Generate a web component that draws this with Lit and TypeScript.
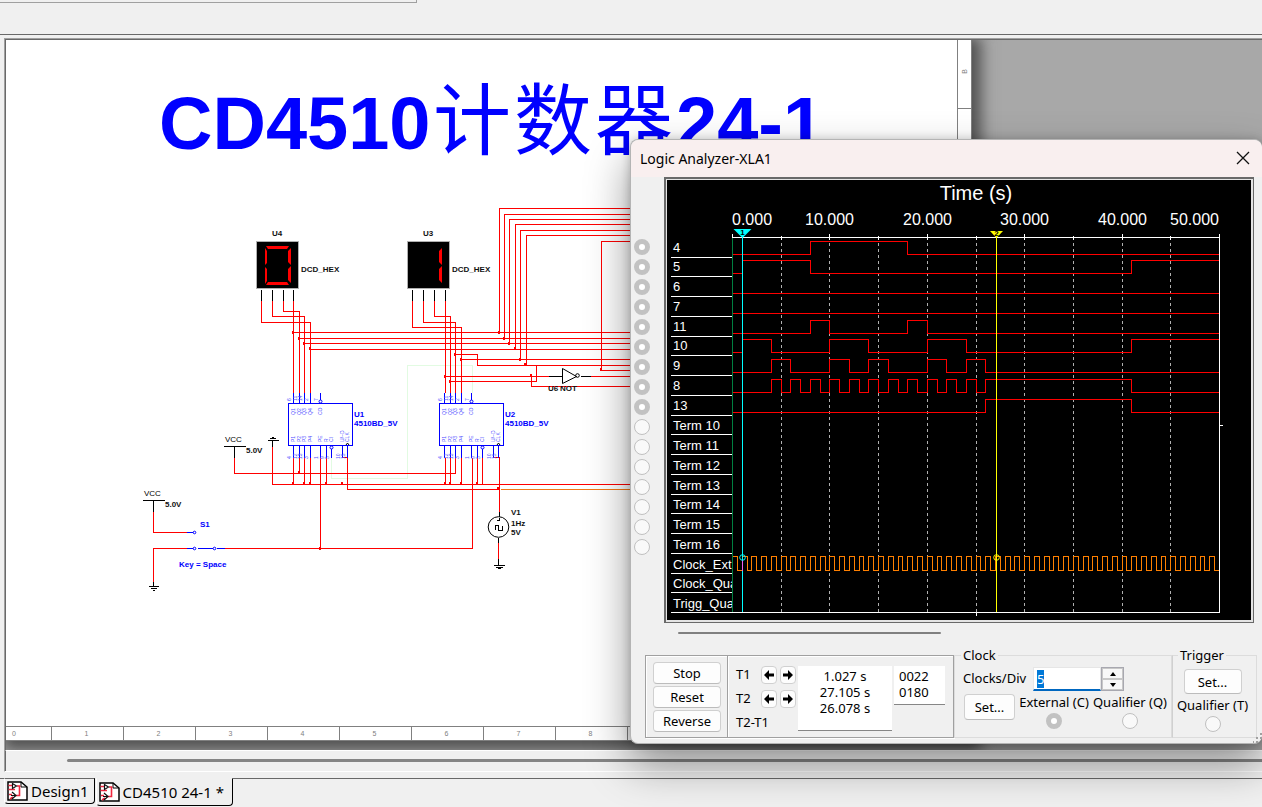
import { LitElement, html, svg, css } from "lit";
import { customElement, query } from "lit/decorators.js";
import { classMap } from "lit/directives/class-map.js";

/* ---------- schematic data ---------- */

const chipTop: [number, string, string][] = [
  [5, "Q1", "6"], [11, "Q2", "11"], [16, "Q3", "14"], [22, "Q4", "2"], [32, "CO", "7"],
];
const chipBottom: [number, string, string][] = [
  [5, "P1", "4"], [11, "P2", "12"], [16, "P3", "13"], [22, "P4", "3"], [32, "PE", "1"],
  [38, "R", "9"], [43, "CI", "5"], [54, "U/~D", "10"], [59, "CLK", "15"],
];

const redWires = [
  "M261 300V322H310V392", "M272 300V316H304V392", "M283 300V311H299V392", "M293 300V392",
  "M412 300V327H461V392", "M423 300V322H455V392", "M434 300V316H450V392", "M445 300V392",
  "M293 332H631", "M299 338H631", "M304 343H631", "M310 349H631",
  "M631 208H499V332", "M631 214H504V338", "M631 219H509V343", "M631 224H515V349",
  "M631 230H520V359", "M631 235H526V365", "M631 241H601V370H631",
  "M455 354H477V365H631", "M461 359H631", "M445 376H548", "M590 376H631",
  "M450 381H536V365", "M531 376V386H631",
  "M234 457V473H455V457", "M272 446V484H631", "M299 457V473",
  "M293 457V484", "M304 457V484", "M310 457V484", "M326 457V484",
  "M320 457V548", "M342 457H347V489H499", "M445 457V484", "M450 457V484", "M461 457V484",
  "M477 457V484", "M482 457V484", "M493 457H499V511", "M498 542V558",
  "M472 457V548H224", "M153 511V532H186", "M186 548H153V581",
];

const blackWires = [
  "M261 289V300", "M272 289V300", "M283 289V300", "M293 289V300",
  "M412 289V300", "M423 289V300", "M434 289V300", "M445 289V300",
  "M548 376H562", "M580 376H590",
  "M223 446H245", "M234 446V457", "M267 440H278", "M269 438H275", "M271 437H273", "M272 440V446",
  "M142 500H164", "M153 500V511", "M153 581V586", "M148 586H158", "M150 588H156", "M152 590H154",
  "M499 511V516", "M498 537V542", "M498 558V565", "M493 565H504", "M495 567H502", "M497 568H500",
  "M629 332H631", "M629 338H631", "M629 343H631", "M629 349H631", "M629 359H631", "M629 365H631",
];

const blueWires = ["M186 532H193", "M186 548H193", "M197 548H212", "M216 548H224"];

const junctions: [number, number][] = [
  [293, 332], [299, 338], [304, 343], [310, 348], [499, 332], [504, 338], [509, 343], [515, 348],
  [520, 359], [525, 364], [601, 369], [455, 354], [461, 359], [445, 376], [450, 381], [531, 375],
  [299, 472], [293, 483], [304, 483], [310, 483], [326, 483], [342, 483],
  [445, 483], [450, 483], [461, 483], [477, 483], [498, 488], [320, 548],
];

/* ---------- analyzer data ---------- */

interface Channel { name: string; high?: [number, number][]; }

const END = 50;
const channels: Channel[] = [
  { name: "4", high: [[8, 18]] },
  { name: "5", high: [[1, 8], [41, END]] },
  { name: "6", high: [] },
  { name: "7", high: [] },
  { name: "11", high: [[8, 10], [18, 20]] },
  { name: "10", high: [[1, 4], [10, 14], [20, 24], [41, END]] },
  { name: "9", high: [[4, 6], [10, 12], [14, 16], [20, 22], [24, 26]] },
  {
    name: "8",
    high: [...Array.from({ length: 11 }, (_, i): [number, number] => [4 + 2 * i, 5 + 2 * i]), [26, 41]],
  },
  { name: "13", high: [[26, 41]] },
  { name: "Term 10" }, { name: "Term 11" }, { name: "Term 12" }, { name: "Term 13" },
  { name: "Term 14" }, { name: "Term 15" }, { name: "Term 16" },
  { name: "Clock_Ext" }, { name: "Clock_Qua" }, { name: "Trigg_Qua" },
];

const timeX = (t: number) => Math.floor(732.5 + t * 9.74) + 0.5;
const ruleY = (row: number) => Math.floor(257 + row * 19.75) + 0.5;

function wave(row: number, high: [number, number][]) {
  const lo = ruleY(row) - 3;
  const hi = ruleY(row) - 16;
  let d = `M733 ${lo}`;
  for (const [a, b] of high) {
    d += `H${timeX(a)}V${hi}H${timeX(b)}`;
    if (b < END) d += `V${lo}`;
  }
  return `${d}H1219`;
}

function clock(row: number) {
  const lo = ruleY(row) - 3;
  const hi = ruleY(row) - 17;
  let d = `M733 ${hi}`;
  for (let n = 0; n < END; n++) {
    d += `H${timeX(n + 0.5)}V${lo}H${timeX(n + 1)}`;
    if (n + 1 < END) d += `V${hi}`;
  }
  return d;
}

/* ---------- schematic sheet ---------- */

@customElement("schematic-sheet")
class SchematicSheet extends LitElement {
  static styles = css`
    :host { display: block; width: 966px; background: #fff; box-shadow: 3px 3px 14px 6px #505050; }
    .upper { display: flex; }
    .drawing { display: block; width: 951px; height: 686px; flex: none; }
    .side { flex: 1; border-left: 1px solid #808080; border-right: 1px solid #808080; display: flex; flex-direction: column; }
    .zone { height: 69px; border-bottom: 1px solid #808080; display: flex; align-items: center; justify-content: center;
      font: 7px "Liberation Sans", sans-serif; color: #808080; box-sizing: border-box; padding-bottom: 6px; }
    .zone span { transform: rotate(-90deg); }
    .ruler { display: flex; height: 13px; border-top: 1px solid #808080; border-bottom: 1px solid #808080; overflow: hidden; }
    .cell { flex: none; width: 72px; box-sizing: border-box; border-right: 1px solid #808080; text-align: center;
      padding-right: 2px; font: 7px/13px "Liberation Sans", sans-serif; color: #808080; }
    .cell:first-child { width: 46px; padding-right: 29px; }
    .wire { fill: none; stroke: #f00; shape-rendering: crispEdges; }
    .black { stroke: #000; }
    .blue { stroke: #00f; }
    .orange { stroke: #f07818; }
    .pale { stroke: #e2fbe2; }
    .dot { fill: #f00; }
    .outline { fill: none; stroke: #000; }
    .bubble { fill: #fff; stroke: #00f; }
    .seg { fill: #f00; }
    .heading { font: bold 74px "Liberation Sans", sans-serif; fill: #00f; }
    .han { font: 400 78px "Noto Sans CJK SC", sans-serif; fill: #00f; }
    .label { font: bold 8px "Liberation Sans", sans-serif; fill: #111; }
    .ink { fill: #00f; }
    .plain { font: 8px "Liberation Sans", sans-serif; fill: #000; }
    .pin { font: 5px "Liberation Sans", sans-serif; fill: #5050ff; }
  `;

  private path(d: string, kind = "") {
    return svg`<path class="wire ${kind}" transform="translate(.5 .5)" d=${d}></path>`;
  }

  private chip(x: number, name: string) {
    return svg`
      <rect x=${x + 0.5} y="403.5" width="64" height="42" class="wire blue"></rect>
      ${chipTop.map(([dx, n, num]) => svg`
        ${this.path(`M${x + dx} 392V403`, "blue")}
        <text class="pin" transform="translate(${x + dx + 2} 415) rotate(-90)">${n}</text>
        <text class="pin" transform="translate(${x + dx - 2} 401) rotate(-90)">${num}</text>`)}
      ${chipBottom.map(([dx, n, num]) => svg`
        ${this.path(`M${x + dx} 445V457`, "blue")}
        <text class="pin" transform="translate(${x + dx + 2} 442) rotate(-90)">${n}</text>
        <text class="pin" transform="translate(${x + dx - 2} 459) rotate(-90)">${num}</text>`)}
      <circle class="bubble" cx=${x + 32.5} cy="401.5" r="1.5"></circle>
      <circle class="bubble" cx=${x + 43.5} cy="447.5" r="1.5"></circle>
      <path class="outline blue" d="M${x + 58} 445L${x + 59.5} 443L${x + 61} 445"></path>
      <text class="label ink" x=${x + 66} y="417">${name}</text>
      <text class="label ink" x=${x + 66} y="426">4510BD_5V</text>`;
  }

  private display(x: number, name: string, digit: number) {
    const right = svg`
      <path class="seg" d="M${x + 35} 248l-3 3v11l3 3zM${x + 35} 266l-3 3v11l3 3z"></path>`;
    const rest = svg`
      <path class="seg" d="M${x + 10} 246h23l-2 3h-19zM${x + 10} 285h23l-2-3h-19z"></path>
      <path class="seg" d="M${x + 9} 248l2 3v12l-2 2zM${x + 9} 267l2 2v12l-2 3z"></path>`;
    return svg`
      <text class="label" x=${x + 16} y="236">${name}</text>
      <rect x=${x + 0.5} y="241.5" width="42" height="47" fill="#000" stroke="#b0b0b0"></rect>
      ${digit === 0 ? rest : ""}${right}
      <text class="label" x=${x + 45} y="272">DCD_HEX</text>`;
  }

  render() {
    return html`
      <div class="upper">
        <svg class="drawing" viewBox="6 40 951 686" role="img" aria-label="Counter schematic">
          <text class="heading" x="159" y="149">CD4510</text>
          <text class="han" x="433" y="149">计</text>
          <text class="han" x="514" y="149">数</text>
          <text class="han" x="595" y="149">器</text>
          <text class="heading" x="676" y="149">24-1</text>
          ${this.path("M331 457V478H407V365H472V392", "pale")}
          ${redWires.map((d) => this.path(d))}
          ${blackWires.map((d) => this.path(d, "black"))}
          ${blueWires.map((d) => this.path(d, "blue"))}
          ${this.path("M500 489H631", "orange")}
          ${junctions.map(([x, y]) => svg`<rect class="dot" x=${x - 1} y=${y - 1} width="2" height="3"></rect>`)}
          ${this.display(256, "U4", 0)} ${this.display(407, "U3", 1)}
          ${this.chip(288, "U1")} ${this.chip(439, "U2")}
          <path class="outline" d="M562.5 368.500V383.500L576.500 376.500Z"></path>
          <circle class="outline" cx="577.5" cy="375.5" r="1.8"></circle>
          <text class="label" x="548" y="391">U6</text><text class="label" x="560" y="391">NOT</text>
          <text class="plain" x="225" y="442">VCC</text><text class="label" x="246" y="453">5.0V</text>
          <text class="plain" x="144" y="496">VCC</text><text class="label" x="165" y="507">5.0V</text>
          <text class="label ink" x="200" y="527">S1</text>
          <text class="label ink" x="179" y="567">Key = Space</text>
          <circle class="bubble" cx="194.5" cy="532.5" r="1.3"></circle>
          <circle class="bubble" cx="194.5" cy="548.5" r="1.3"></circle>
          <circle class="bubble" cx="214.5" cy="548.5" r="1.3"></circle>
          <circle class="outline" cx="498.5" cy="527" r="10.300"></circle>
          <path class="wire black" d="M495.5 530V525.500H498.500V530.500H502.500V525.500M497 520.500H499.500V518"></path>
          <text class="label" x="511" y="515">V1</text>
          <text class="label" x="511" y="526">1Hz</text>
          <text class="label" x="511" y="535">5V</text>
        </svg>
        <div class="side"><div class="zone"><span>B</span></div></div>
      </div>
      <div class="ruler">
        ${Array.from({ length: 13 }, (_, i) => html`<div class="cell">${i}</div>`)}
      </div>`;
  }
}

/* ---------- logic analyzer window ---------- */

@customElement("logic-analyzer")
class LogicAnalyzer extends LitElement {
  @query(".divisions") divisions!: HTMLInputElement;

  static styles = css`
    :host { display: block; box-sizing: border-box; border: 1px solid #b4b4b4; border-right: 0; border-radius: 8px; background: #f0f0f0;
      box-shadow: 0 20px 44px rgba(0, 0, 0, .42), 0 1px 10px rgba(0, 0, 0, .22);
      font: 13px/16px "Noto Sans", sans-serif; color: #000; }
    .title { display: flex; align-items: center; justify-content: space-between; height: 37px; padding: 0 8px 0 9px;
      background: #f9efef; border-radius: 8px 8px 0 0; font-size: 14px; }
    .close { width: 22px; height: 22px; padding: 3px 4px 5px; border: 0; background: none; }
    .close svg { display: block; }
    .main { display: flex; }
    .terminals { display: flex; flex-direction: column; gap: 4px; width: 30px; padding: 62px 0 0 3px; }
    .radio { appearance: none; box-sizing: border-box; width: 16px; height: 16px; margin: 0; border: 1px solid #c0c0c0;
      border-radius: 50%; background: #f9f9f9; }
    .radio:checked { border: 5px solid #c2c2c2; background: #fff; }
    .screen { flex: 1; min-width: 0; margin-right: 8px; border: 2px solid #696969; border-width: 2px 1px 1px 2px; padding: 1px 2px 2px 1px;
      background: linear-gradient(#000, #000) content-box, #e4e4e4; }
    .plot { display: block; width: 100%; }
    .thumb { width: 263px; height: 2px; margin: 9px 0 21px 47px; border-radius: 1px; background: #808080; }
    .panels { display: grid; grid-template-columns: 309px 218px 1fr; margin: 0 5px 5px 14px; }
    .box { display: flex; height: 83px; box-sizing: border-box; border: 1px solid #a0a0a0; box-shadow: inset 1px 1px #fff, 1px 1px #fff; }
    .actions { display: flex; flex-direction: column; gap: 2px; padding: 6px 6px 0 7px; width: 68px; border-right: 1px solid #a0a0a0; }
    .push { box-sizing: border-box; height: 22px; padding: 0; border: 1px solid #d0d0d0; border-bottom-color: #bcbcbc; border-radius: 4px;
      background: #fdfdfd; font: inherit; color: #000; }
    .readout { flex: 1; display: flex; gap: 2px; padding: 7px 0 0 8px; box-shadow: inset 1px 0 #fff; }
    .steps { display: grid; grid-template-columns: 22px 16px 16px; grid-auto-rows: 24px; column-gap: 3px; align-items: center; }
    .steps span { padding-bottom: 2px; }
    .wide { grid-column: 1 / 4; }
    .step { box-sizing: border-box; height: 18px; padding: 0; border: 1px solid #d0d0d0; border-radius: 4px; background: #fdfdfd;
      display: flex; align-items: center; justify-content: center; }
    .times, .values { display: block; box-sizing: border-box; margin-top: 3px; padding: 2px 0 0; background: #fff; border-bottom: 1px solid #868686; }
    .times { width: 94px; height: 65px; text-align: center; }
    .values { width: 51px; height: 39px; padding-left: 5px; }
    .group { min-width: 0; height: 91px; box-sizing: border-box; margin: -8px 0 0; padding: 0 8px; border: 1px solid #dcdcdc; }
    .group legend { padding: 0 2px; margin-left: -2px; }
    .trigger { border-left-color: #d0d0d0; padding: 0 7px; }
    .line { display: flex; align-items: center; height: 24px; margin-top: 4px; }
    .line label { width: 70px; padding-bottom: 2px; }
    .divisions { box-sizing: border-box; width: 68px; height: 24px; padding: 0 3px; border: 1px solid #e6e6e6; border-bottom: 2px solid #0067c0;
      border-radius: 0; outline: 0; background: #fff; font: inherit; color: #000; }
    .divisions::selection { background: #0078d7; color: #fff; }
    .spin { display: flex; flex-direction: column; box-sizing: border-box; width: 23px; height: 24px; border: 1px solid #a8a8b0; }
    .notch { flex: 1; padding: 0; border: 1px solid #c8c8c8; background: #f8f8f8; display: flex; align-items: center; justify-content: center; }
    .sources { display: flex; margin-top: 3px; gap: 4px; }
    .set { flex: none; width: 51px; height: 26px; margin-left: 1px; }
    .source { flex: none; display: flex; flex-direction: column; align-items: center; gap: 3px; width: 70px; white-space: nowrap; }
    .source.far { width: 74px; }
    .stack { display: flex; flex-direction: column; align-items: center; gap: 3px; margin: 6px 4px 0 0; }
    .stack .push { width: 58px; height: 25px; }
    .grip { position: absolute; right: 0; bottom: 0; }
    .tick { font: 16px "Liberation Sans", sans-serif; fill: #fff; text-anchor: middle; }
    .axis { font: 20px "Liberation Sans", sans-serif; fill: #fff; text-anchor: middle; }
    .start { text-anchor: start; }
    .end { text-anchor: end; }
    .name { font: 13px "Liberation Sans", sans-serif; fill: #fff; }
    .stroke { fill: none; shape-rendering: crispEdges; }
    .white { stroke: #fff; }
    .green { stroke: #008040; }
    .grid { stroke: #b0b0b0; stroke-dasharray: 3 3; }
    .red { stroke: #f00; }
    .clock { stroke: #ff8000; }
    .cyan { stroke: #0ff; }
    .yellow { stroke: #ff0; }
    .magenta { stroke: #f060f0; }
    .mark { font: bold 8px "Liberation Sans", sans-serif; text-anchor: middle; fill: #000; }
  `;

  firstUpdated() {
    this.divisions.focus();
    this.divisions.select();
  }

  private plot() {
    const tens = [10, 20, 30, 40];
    return html`
      <svg class="plot" viewBox="667 180 584 440" role="img" aria-label="Logic traces over time">
        <defs><clipPath id="names"><rect x="667" y="238" width="65" height="376"></rect></clipPath></defs>
        <text class="axis" x="976" y="200">Time (s)</text>
        <text class="tick start" x="732" y="225">0.000</text>
        ${tens.map((t) => svg`<text class="tick" x=${timeX(t)} y="225">${t}.000</text>`)}
        <text class="tick end" x="1219" y="225">50.000</text>
        ${channels.map((c, i) => svg`
          <text class="name" clip-path="url(#names)" x="673" y=${ruleY(i) - 4.5 - (i % 19 < 9 ? 1 : 0)}>${c.name}</text>
          <path class="stroke white" d="M671 ${ruleY(i)}H732"></path>`)}
        ${Array.from({ length: 9 }, (_, i) => svg`
          <path class="stroke grid" d="M${timeX(5 * (i + 1))} 243V612"></path>
          <path class="stroke white" d="M${timeX(5 * (i + 1))} ${i % 2 ? 234 : 236}V240"></path>`)}
        ${channels.map((c, i) => (c.high ? svg`<path class="stroke red" d=${wave(i, c.high)}></path>` : ""))}
        <path class="stroke clock" d=${clock(16)}></path>
        <path class="stroke green" d="M732.5 238V612"></path>
        <path class="stroke white" d="M732.5 234V238M732 237.500H1219.500M1219.500 234V612.500M732 612.500H1220M976.500 612V616M1219 425.500H1223"></path>
        <path class="stroke cyan" d="M742.5 237V612"></path>
        <path class="stroke yellow" d="M996.5 237V612"></path>
        <path class="stroke magenta" d="M742.5 560V571"></path>
        <path d="M733.5 229H751.5L742.5 238Z" fill="#0ff"></path>
        <path d="M990 231H1003L996.5 238Z" fill="#ff0"></path>
        <text class="mark" x="742.500" y="235">1</text>
        <text class="mark" x="996.500" y="236">2</text>
        <circle cx="742.5" cy="557.5" r="2.8" fill="none" stroke="#0ff"></circle>
        <circle cx="996.5" cy="557.5" r="2.8" fill="none" stroke="#ff0"></circle>
      </svg>`;
  }

  private arrow(label: string, left: boolean) {
    return html`<button class="step" aria-label=${label}>
      <svg width="10" height="10" viewBox="0 0 10 10">
        <path d=${left ? "M0 5L5 0V3.500H10V6.500H5V10Z" : "M10 5L5 0V3.500H0V6.500H5V10Z"}></path>
      </svg></button>`;
  }

  render() {
    return html`
      <div class="title"><span>Logic Analyzer-XLA1</span>
        <button class="close" aria-label="Close">
          <svg width="14" height="14" viewBox="0 0 14 14"><path d="M1 1L13 13M13 1L1 13" stroke="#111" stroke-width="1.300"></path></svg>
        </button>
      </div>
      <div class="main">
        <div class="terminals">
          ${channels.slice(0, 16).map((c, i) => html`
            <input class="radio" type="radio" name="terminal-${i}" aria-label=${c.name} .checked=${i < 9}>`)}
        </div>
        <div class="screen">${this.plot()}</div>
      </div>
      <div class="thumb"></div>
      <div class="panels">
        <div class="box">
          <div class="actions">
            <button class="push">Stop</button>
            <button class="push">Reset</button>
            <button class="push">Reverse</button>
          </div>
          <div class="readout">
            <div class="steps">
              <span>T1</span>${this.arrow("T1 back", true)}${this.arrow("T1 forward", false)}
              <span>T2</span>${this.arrow("T2 back", true)}${this.arrow("T2 forward", false)}
              <span class="wide">T2-T1</span>
            </div>
            <output class="times">1.027 s<br>27.105 s<br>26.078 s</output>
            <output class="values">0022<br>0180</output>
          </div>
        </div>
        <fieldset class="group">
          <legend>Clock</legend>
          <div class="line">
            <label for="div">Clocks/Div</label>
            <input class="divisions" id="div" type="text" value="5">
            <span class="spin">
              <button class="notch" aria-label="Increase"><svg width="6" height="4"><path d="M3 0L6 4H0Z"></path></svg></button>
              <button class="notch" aria-label="Decrease"><svg width="6" height="4"><path d="M3 4L6 0H0Z"></path></svg></button>
            </span>
          </div>
          <div class="sources">
            <button class="push set">Set...</button>
            <label class="source">External (C)<input class="radio" type="radio" name="external" checked></label>
            <label class="source far">Qualifier (Q)<input class="radio" type="radio" name="qualifier-q"></label>
          </div>
        </fieldset>
        <fieldset class="group trigger">
          <legend>Trigger</legend>
          <div class="stack">
            <button class="push">Set...</button>
            <label class="source">Qualifier (T)<input class="radio" type="radio" name="qualifier-t"></label>
          </div>
        </fieldset>
      </div>
      <svg class="grip" width="9" height="10" fill="#a0a0a0">
        <path d="M7 0h2v2h-2zM3 4h2v2h-2zM7 4h2v2h-2zM0 8h1v2h-1zM3 8h2v2h-2z"></path>
      </svg>`;
  }
}

/* ---------- application ---------- */

@customElement("app-root")
class AppRoot extends LitElement {
  static styles = css`
    :host { display: flex; flex-direction: column; position: relative; height: 100vh; overflow: hidden; background: #f0f0f0; }
    .toolbar { flex: none; height: 34px; border-bottom: 1px solid #696969; }
    .strip { width: 33%; height: 2px; border-right: 1px solid #a0a0a0; border-bottom: 1px solid #a0a0a0; }
    .workspace { flex: 1; min-height: 0; display: flex; flex-direction: column; margin: 3px 0 6px 4px;
      border-top: 1px solid #a0a0a0; border-left: 1px solid #a0a0a0; border-bottom: 1px solid #fff; }
    .viewport { flex: 1; min-height: 0; overflow: hidden; background: #a8a8a8; border-top: 1px solid #696969; border-left: 1px solid #696969; }
    .scroll { flex: none; height: 20px; border-top: 1px solid #fff; display: flex; align-items: center; padding-left: 61px; border-left: 1px solid #696969; }
    .handle { flex: 1; height: 3px; margin-bottom: 2px; border-radius: 2px 0 0 2px; background: #858585; }
    .tabs { flex: none; display: flex; align-items: flex-start; height: 29px; }
    .edge { width: 4px; height: 0; border-top: 1px solid #696969; }
    .rest { flex: 1; border-top: 1px solid #696969; }
    .tab { display: flex; align-items: center; gap: 3px; box-sizing: border-box; height: 26px; padding: 0 5px 0 2px; border: 1px solid #000;
      border-top-color: #696969; border-left-color: #fff; border-radius: 0 0 4px 4px; background: #f0f0f0; color: #000; text-decoration: none;
      font: 15px/20px "Noto Sans", sans-serif; white-space: nowrap; }
    .tab.active { height: 28px; padding-right: 8px; border-top-color: #f0f0f0; margin-left: 1px; }
    .window { position: absolute; left: 630px; right: 0; top: 139px; }
  `;

  private tab(name: string, active: boolean) {
    return html`<a href="#" class=${classMap({ tab: true, active })}>
      <svg width="21" height="20" viewBox="0 0 21 20" fill="none">
        <path d="M1 1H14L20 6V19H1Z" fill="#fff" stroke="#000" stroke-width="1.500"></path>
        <path d="M14 1V6H20" stroke="#000"></path>
        <path d="M1.500 4.500H5M10 5H12.500V14.500H9M1.500 8.500H8M2 13.500H5M3 18L6 16" stroke="#f02840" stroke-width="1.600"></path>
        <path d="M5.500 2.500V7.500L9.500 5ZM5 11L9 14.500L5 18M4 14.500H9" stroke="#111" stroke-width="1.200"></path>
      </svg><span>${name}</span></a>`;
  }

  render() {
    return html`
      <div class="toolbar"><div class="strip"></div></div>
      <div class="workspace">
        <div class="viewport"><schematic-sheet></schematic-sheet></div>
        <div class="scroll"><div class="handle"></div></div>
      </div>
      <nav class="tabs">
        <div class="edge"></div>
        ${this.tab("Design1", false)} ${this.tab("CD4510 24-1 *", true)}
        <div class="rest"></div>
      </nav>
      <logic-analyzer class="window"></logic-analyzer>`;
  }
}
